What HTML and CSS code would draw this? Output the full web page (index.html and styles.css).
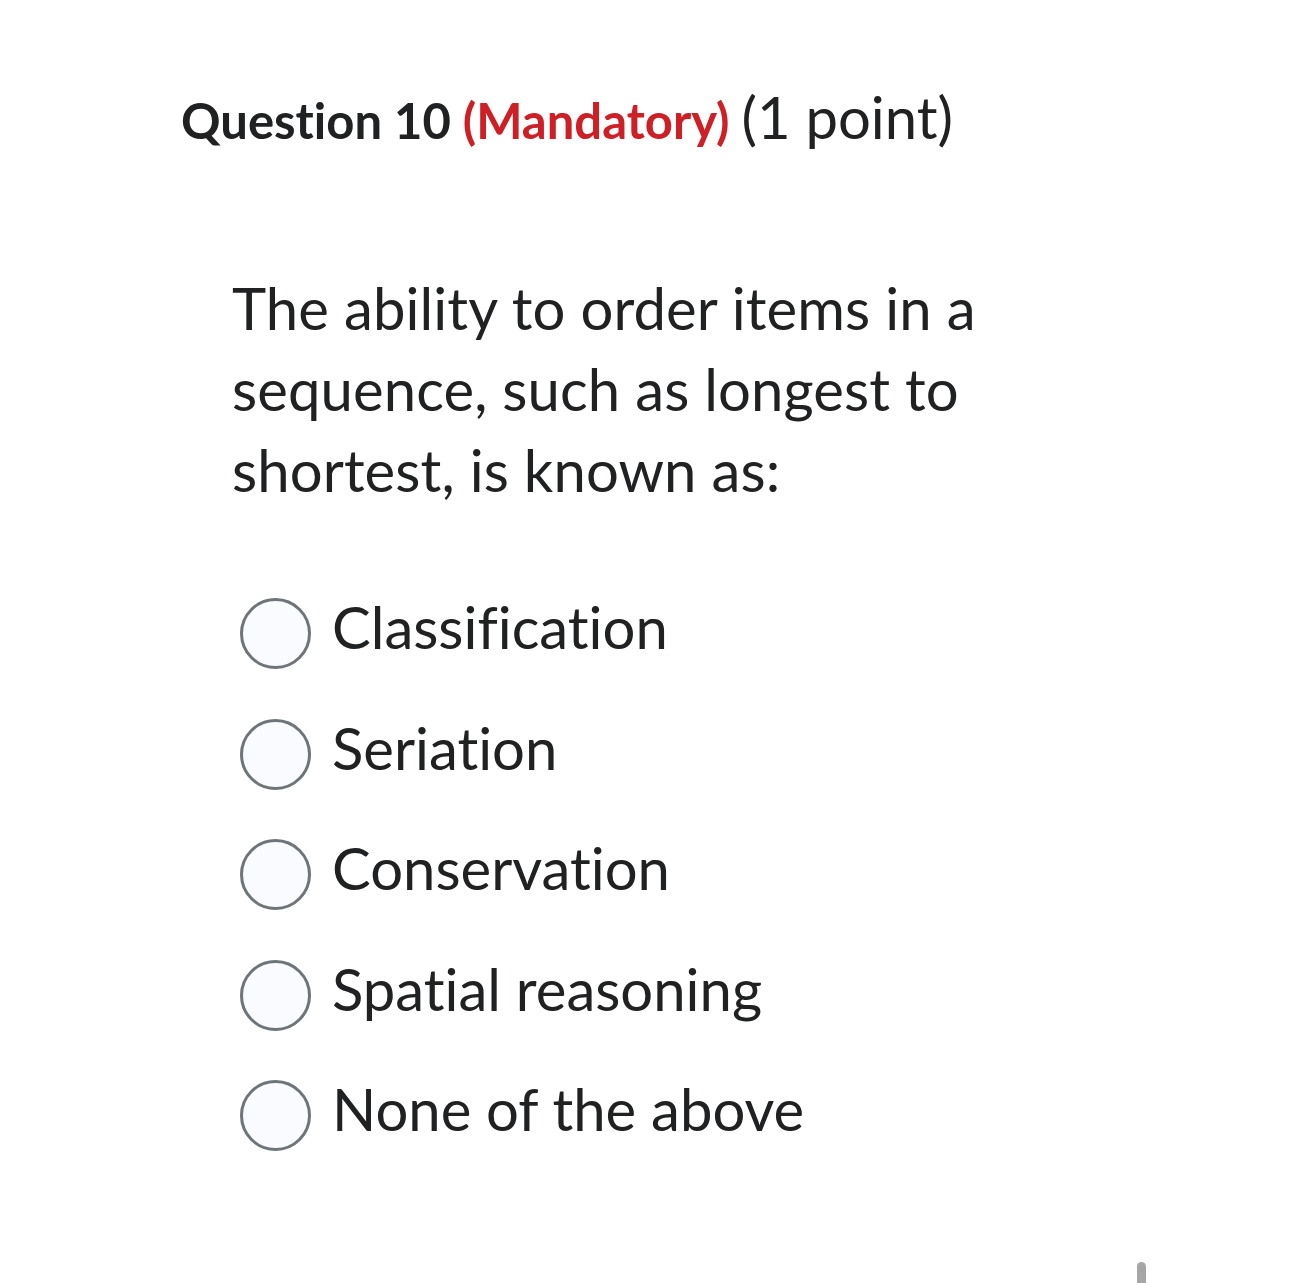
FILE: index.html
```html
<!DOCTYPE html>
<html>
<head>
<meta charset="utf-8">
<link rel="stylesheet" href="styles.css">
</head>
<body>
<div class="page">
  <h2 class="q-title"><span class="q-num">Question 10</span> <span class="q-mand">(Mandatory)</span> <span class="q-pts">(1 point)</span></h2>
  <div class="q-body">
    <p class="q-text">The ability to order items in a sequence, such as longest to shortest, is known as:</p>
    <div class="options">
      <label class="opt"><span class="radio"></span><span class="opt-text">Classification</span></label>
      <label class="opt"><span class="radio"></span><span class="opt-text">Seriation</span></label>
      <label class="opt"><span class="radio"></span><span class="opt-text">Conservation</span></label>
      <label class="opt"><span class="radio"></span><span class="opt-text">Spatial reasoning</span></label>
      <label class="opt"><span class="radio"></span><span class="opt-text">None of the above</span></label>
    </div>
  </div>
  <div class="scroll-thumb"></div>
</div>
</body>
</html>
```
FILE: styles.css
```css
html, body {
  margin: 0;
  padding: 0;
  background: #ffffff;
}
body {
  font-family: Lato, "Open Sans", sans-serif;
  color: #202122;
  font-variant-ligatures: none;
  font-feature-settings: "liga" 0, "clig" 0;
}
.page {
  width: 1290px;
  height: 1283px;
  position: relative;
  overflow: hidden;
}
.q-title {
  margin: 0;
  padding: 82px 0 0 181px;
  font-size: 49px;
  line-height: 70px;
  font-weight: 700;
}
.q-mand {
  color: #cd2026;
}
.q-pts {
  font-weight: 400;
  font-size: 58px;
}
.q-body {
  padding: 0 0 0 232px;
  width: 780px;
}
.q-text {
  margin: 0;
  padding-top: 112px;
  font-size: 58px;
  line-height: 81px;
  letter-spacing: 0.1px;
}
.options {
  display: flex;
  flex-direction: column;
  gap: 50.5px;
  padding-top: 89px;
  margin-left: 8px;
}
.opt {
  display: flex;
  align-items: flex-start;
  gap: 21px;
  height: 70px;
}
.radio {
  width: 65px;
  height: 65px;
  border: 3px solid #6e7477;
  border-radius: 50%;
  background: #f9fbff;
  flex: none;
  margin-top: -1px;
}
.opt-text {
  font-size: 58px;
  line-height: 55px;
}
.scroll-thumb {
  position: absolute;
  left: 1137px;
  top: 1262px;
  width: 9px;
  height: 30px;
  background: #a6a6a6;
  border-radius: 5px 5px 0 0;
}
```
